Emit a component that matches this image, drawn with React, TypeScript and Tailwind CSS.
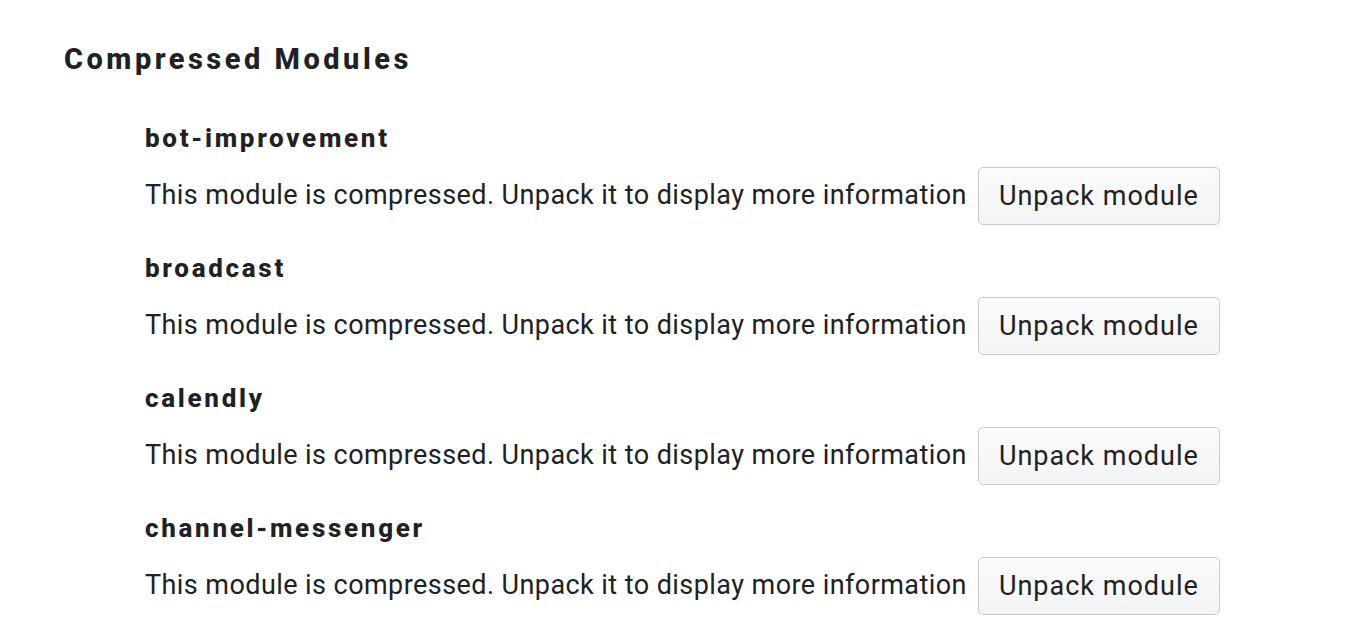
import React from "react";

const MODULES = ["bot-improvement", "broadcast", "calendly", "channel-messenger"];

export default function App() {
  return (
    <div className="min-h-screen bg-white px-16 pt-[45px] text-[#202124]" style={{ fontFamily: "Roboto, 'Liberation Sans', sans-serif" }}>
      <h2 className="text-[29px] font-extrabold leading-none tracking-[3.5px]">Compressed Modules</h2>
      <div className="mt-[51px] flex flex-col gap-[30px] pl-[81px]">
        {MODULES.map((name) => (
          <div key={name} className="flex flex-col gap-[16px]">
            <p className="text-[26px] font-extrabold leading-none tracking-[2.7px]">{name}</p>
            <div className="flex items-center gap-[11px]">
              <span className="text-[27px] leading-[1.172] tracking-[0.43px]">
                This module is compressed. Unpack it to display more information
              </span>
              <button className="h-[58px] rounded-[5px] border border-[#c9cacc] bg-gradient-to-b from-[#fbfbfc] to-[#f3f4f6] px-[20px] text-[27px] tracking-[1px] text-[#202124]">
                Unpack module
              </button>
            </div>
          </div>
        ))}
      </div>
    </div>
  );
}
